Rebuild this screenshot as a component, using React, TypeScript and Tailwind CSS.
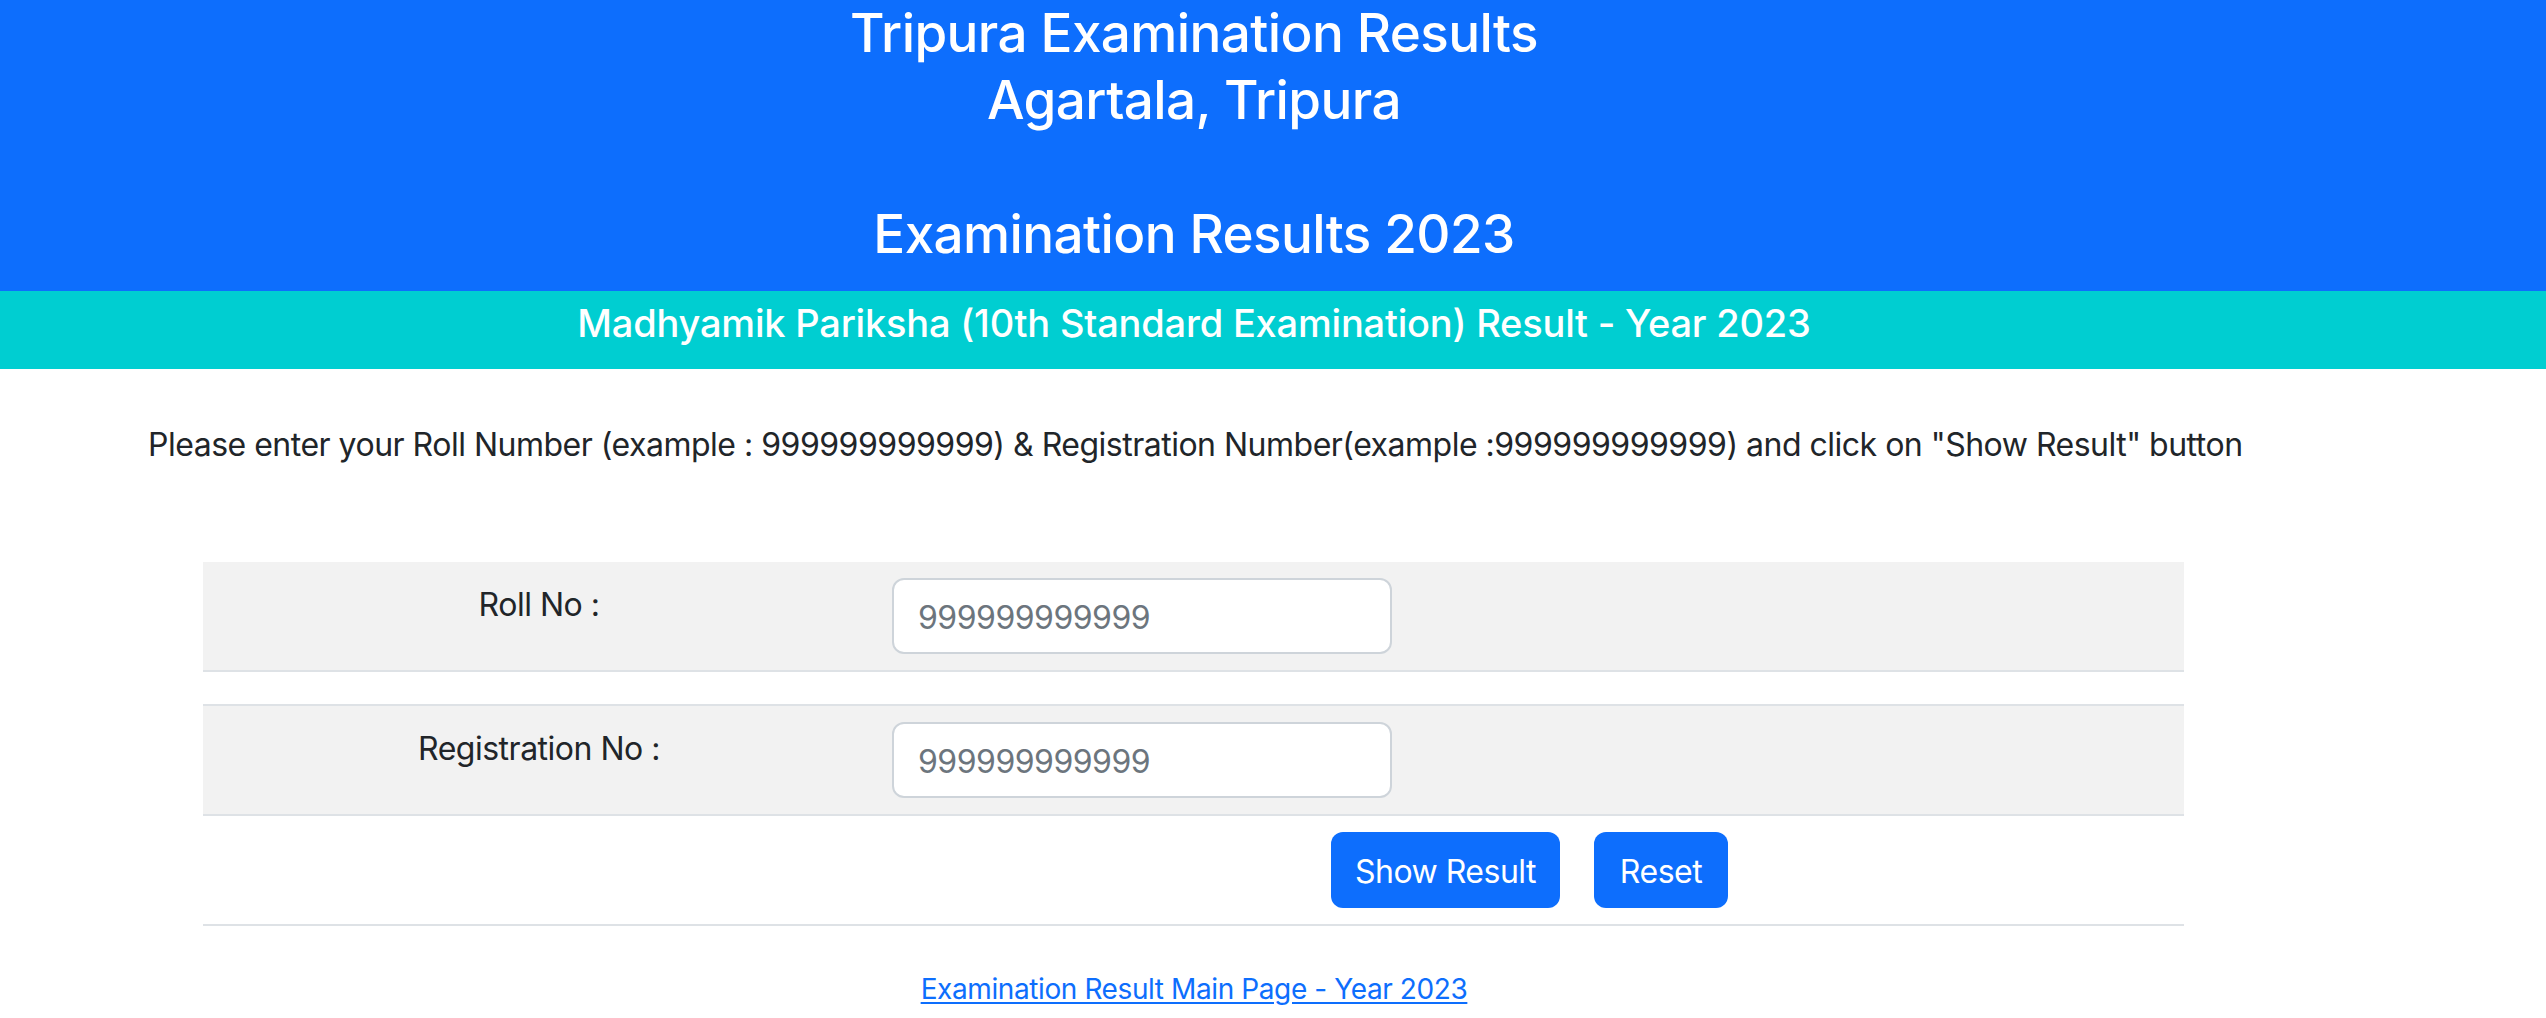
const FONT = "font-['Inter','Liberation_Sans',sans-serif]";

export default function App() {
  return (
    <div className={`${FONT} min-h-screen w-full bg-white text-[#212529]`}>
      <header className="bg-[#0d6efd] pb-[23px] text-white">
        <div className="w-[2388px] text-center">
          <h3 className="text-[53px] font-medium leading-[67px] tracking-[-0.6px]">
            Tripura Examination Results
            <br />
            Agartala, Tripura
            <br />
            <br />
            Examination Results 2023
          </h3>
        </div>
      </header>

      <div className="bg-[#00ced1] pt-[8px] pb-[22px] text-white">
        <h5 className="w-[2388px] text-center text-[38px] font-medium leading-[48px] tracking-[-0.2px]">
          Madhyamik Pariksha (10th Standard Examination) Result - Year 2023
        </h5>
      </div>

      <main className="w-[2388px] tracking-[-0.5px]">
        <p className="mt-[52px] pl-[148px] text-[32px] leading-[48px]">
          Please enter your Roll Number (example : 999999999999) &amp; Registration Number(example :999999999999) and
          click on "Show Result" button
        </p>

        <div className="ml-[203px] mt-[93px] w-[1981px]">
          <FieldRow label="Roll No :" />
        </div>

        <div className="ml-[203px] mt-[32px] w-[1981px] border-t-2 border-[#dee2e6]">
          <FieldRow label="Registration No :" />
          <div className="flex border-b-2 border-[#dee2e6]">
            <div className="w-[672px]" />
            <div className="flex gap-[34px] py-[16px] pl-[456px]">
              <button
                type="button"
                className="h-[76px] w-[229px] rounded-[12px] bg-[#0d6efd] pt-[3px] text-[32px] leading-[48px] text-white"
              >
                Show Result
              </button>
              <button
                type="button"
                className="h-[76px] w-[134px] rounded-[12px] bg-[#0d6efd] pt-[3px] text-[32px] leading-[48px] text-white"
              >
                Reset
              </button>
            </div>
          </div>
        </div>

        <div className="mt-[42px] text-center">
          <a
            href="#"
            className="text-[28px] leading-[42px] tracking-[-0.4px] text-[#0d6efd] underline underline-offset-[3px]"
          >
            Examination Result Main Page - Year 2023
          </a>
        </div>
      </main>
    </div>
  );
}

function FieldRow({ label }: { label: string }) {
  return (
    <div className="flex border-b-2 border-[#dee2e6] bg-[#f2f2f2]">
      <div className="w-[672px] px-[16px] pt-[19px] text-center text-[32px] leading-[48px]">{label}</div>
      <div className="py-[16px] pl-[17px]">
        <input
          type="text"
          placeholder="999999999999"
          className="h-[76px] w-[500px] rounded-[12px] border-2 border-[#ced4da] bg-white px-[24px] pt-[3px] text-[32px] leading-[48px] tracking-[-0.5px] text-[#212529] placeholder:text-[#6c757d] outline-none"
        />
      </div>
    </div>
  );
}
